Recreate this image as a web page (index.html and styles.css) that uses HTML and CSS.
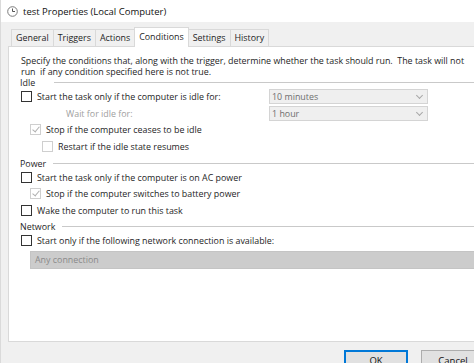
FILE: index.html
```html
<!DOCTYPE html>
<html lang="en">
<head>
    <meta charset="UTF-8">
    <title>test Properties (Local Computer)</title>
    <link rel="stylesheet" href="styles.css">
</head>
<body>
    <div class="window">
        <!-- Title bar -->
        <div class="titlebar">
            <svg class="title-icon" width="11" height="11" viewBox="0 0 11 11">
                <circle cx="5.5" cy="5.5" r="4.8" fill="#fff" stroke="#7a7a7a" stroke-width="1"/>
                <path d="M5.5 2.5 V5.5 H8" fill="none" stroke="#555" stroke-width="1"/>
            </svg>
            <span>test Properties (Local Computer)</span>
        </div>

        <!-- Tabs -->
        <div class="tabs">
            <div class="tab">General</div>
            <div class="tab">Triggers</div>
            <div class="tab">Actions</div>
            <div class="tab active">Conditions</div>
            <div class="tab">Settings</div>
            <div class="tab">History</div>
        </div>

        <!-- Tab panel -->
        <div class="panel">
            <p class="intro">Specify the conditions that, along with the trigger, determine whether the task should run.&nbsp; The task will not<br>run&nbsp; if any condition specified here is not true.</p>

            <div class="group-head idle-head"><span class="group-name">Idle</span><span class="group-line"></span></div>

            <div class="row row-idle">
                <div class="label-col">
                    <span class="check"></span>
                    <span>Start the task only if the computer is idle for:</span>
                </div>
                <div class="combo">10 minutes<span class="chev"></span></div>
            </div>
            <div class="row row-wait">
                <div class="label-col indent-wait">
                    <span class="muted">Wait for idle for:</span>
                </div>
                <div class="combo">1 hour<span class="chev"></span></div>
            </div>
            <div class="row row-stop indent-1">
                <span class="check disabled checked"></span>
                <span>Stop if the computer ceases to be idle</span>
            </div>
            <div class="row row-restart indent-2">
                <span class="check disabled"></span>
                <span>Restart if the idle state resumes</span>
            </div>

            <div class="group-head power-head"><span class="group-name">Power</span><span class="group-line"></span></div>

            <div class="row row-ac">
                <span class="check"></span>
                <span>Start the task only if the computer is on AC power</span>
            </div>
            <div class="row row-battery indent-1">
                <span class="check disabled checked"></span>
                <span>Stop if the computer switches to battery power</span>
            </div>
            <div class="row row-wake">
                <span class="check"></span>
                <span>Wake the computer to run this task</span>
            </div>

            <div class="group-head net-head"><span class="group-name">Network</span><span class="group-line"></span></div>

            <div class="row row-net">
                <span class="check"></span>
                <span>Start only if the following network connection is available:</span>
            </div>
            <div class="combo wide">Any connection<span class="chev"></span></div>
        </div>

        <!-- Footer buttons -->
        <div class="footer">
            <button class="btn default">OK</button>
            <button class="btn">Cancel</button>
        </div>
    </div>
</body>
</html>
```

FILE: styles.css
```css
/* Reset */
* {
    margin: 0;
    padding: 0;
    box-sizing: border-box;
}

body {
    font-family: "Segoe UI", "Open Sans", sans-serif;
    font-size: 8.9px;
    color: #1e1e1e;
    background-color: #f0f0f0;
    overflow: hidden;
}

.window {
    width: 500px;
    height: 363px;
    border-left: 1px solid #dadada;
}

/* Title bar */
.titlebar {
    height: 22px;
    background-color: #fff;
    display: flex;
    align-items: center;
    gap: 5px;
    padding-left: 6px;
    font-size: 9.5px;
    color: #111;
}

/* Tabs */
.tabs {
    display: flex;
    align-items: flex-end;
    height: 24px;
    padding-left: 10px;
}

.tab {
    height: 17px;
    line-height: 16px;
    padding: 0 4px;
    border: 1px solid #d9d9d9;
    border-bottom: none;
    margin-right: -1px;
    background-color: #f0f0f0;
    position: relative;
}

.tab.active {
    height: 20px;
    line-height: 17px;
    background-color: #fff;
    margin-bottom: -1px;
    z-index: 1;
}

/* Panel */
.panel {
    margin: 0 8px 0 7px;
    height: 296px;
    background-color: #fff;
    border: 1px solid #d9d9d9;
    padding: 8px 0 0 12px;
}

.intro {
    line-height: 11px;
}

.group-head {
    display: flex;
    align-items: center;
    height: 11px;
    margin-left: -1px;
}

.group-line {
    flex: 1;
    border-top: 1px solid #c9c9c9;
    margin-left: 7px;
}

.idle-head .group-name {
    min-width: 27px;
}

.power-head {
    margin-top: 1px;
    height: 13px;
}

.net-head {
    height: 14px;
}

/* Rows */
.row {
    display: flex;
    align-items: center;
    gap: 5px;
}

.label-col {
    width: 243px;
    display: flex;
    align-items: center;
    gap: 5px;
}

.row-idle { height: 17px; }
.row-wait { height: 17px; }
.row-stop { height: 15px; }
.row-restart { height: 19px; }
.row-ac { height: 14px; }
.row-battery { height: 18px; }
.row-wake { height: 17px; }
.row-net { height: 15px; }

.indent-wait { padding-left: 45px; }
.indent-1 { padding-left: 9px; }
.indent-2 { padding-left: 21px; }

.muted {
    color: #a0a0a0;
}

/* Checkboxes */
.check {
    width: 11px;
    height: 11px;
    border: 1px solid #333;
    background-color: #fff;
    flex-shrink: 0;
    position: relative;
}

.check.disabled {
    border-color: #cfcfcf;
}

.check.checked::after {
    content: "";
    position: absolute;
    left: 3px;
    top: 0px;
    width: 3px;
    height: 6px;
    border: solid #b0b0b0;
    border-width: 0 1px 1px 0;
    transform: rotate(40deg);
}

/* Combo boxes */
.combo {
    width: 159px;
    height: 15px;
    line-height: 13px;
    padding-left: 2px;
    background-color: #efefef;
    border: 1px solid #d4d4d4;
    color: #6e6e6e;
    position: relative;
}

.combo.wide {
    width: auto;
    height: 18px;
    line-height: 16px;
    margin: 3px 0 0 9px;
    padding-left: 4px;
    background-color: #cccccc;
    border-color: #c4c4c4;
    color: #8a8a8a;
}

.chev {
    position: absolute;
    right: 5px;
    top: 3px;
    width: 5px;
    height: 5px;
    border: solid #a8a8a8;
    border-width: 0 1px 1px 0;
    transform: rotate(45deg);
}

/* Footer */
.footer {
    display: flex;
    justify-content: flex-end;
    gap: 13px;
    padding: 8px 15px 0 0;
}

.btn {
    width: 64px;
    height: 20px;
    font-family: inherit;
    font-size: 9.5px;
    color: #111;
    background-color: #e1e1e1;
    border: 1px solid #adadad;
}

.btn.default {
    border: 2px solid #0078d7;
}
```
